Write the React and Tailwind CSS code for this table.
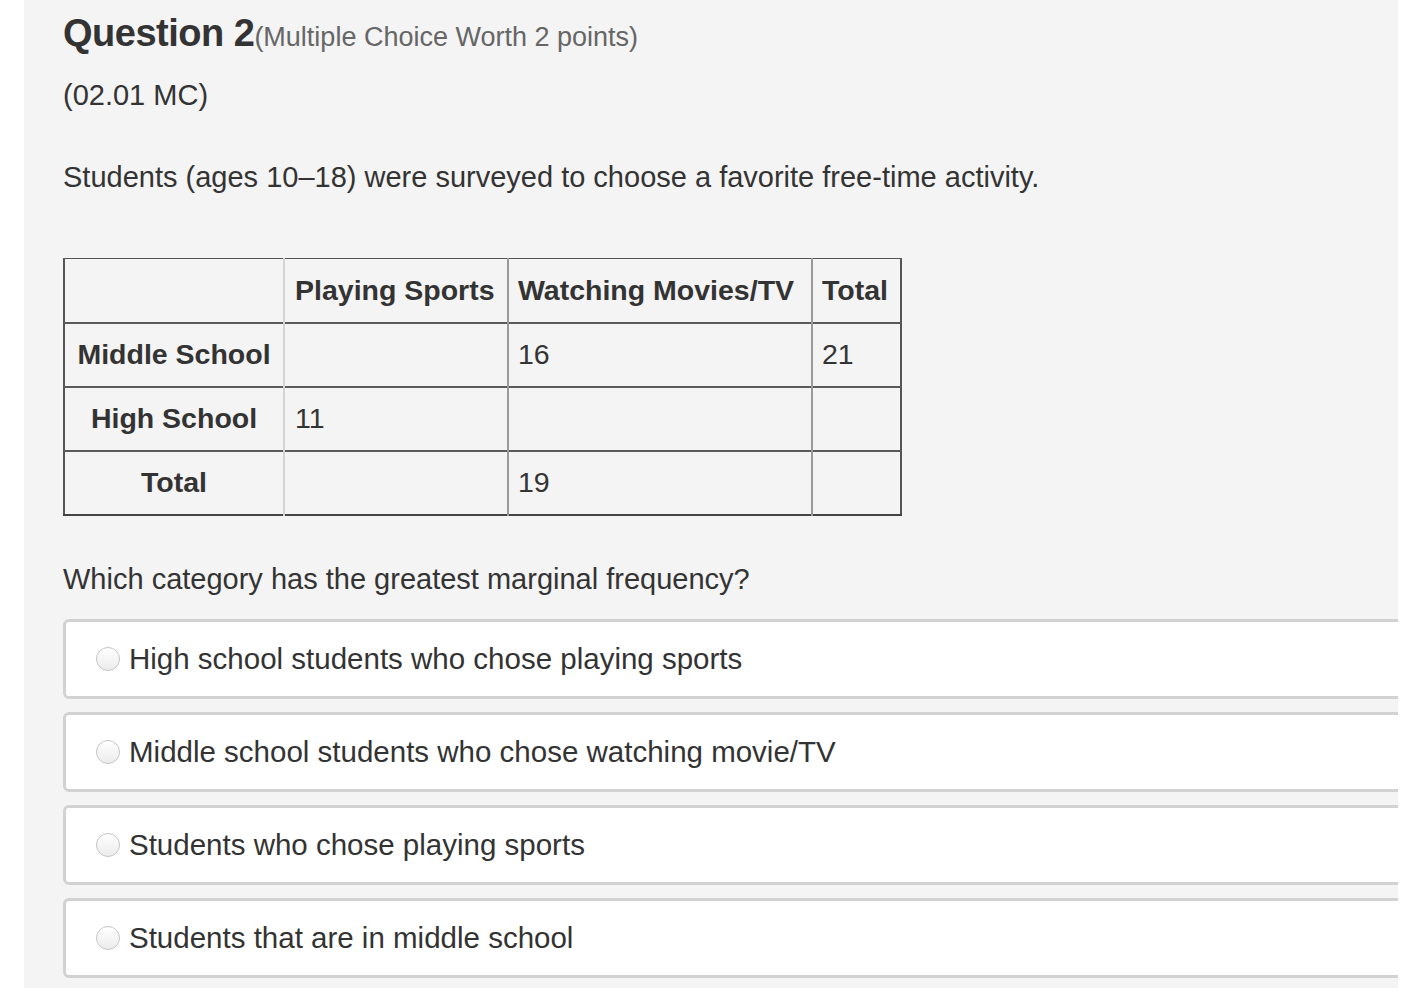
import React from "react";

const font = { fontFamily: '"Liberation Sans", Arial, sans-serif' };

const rows = [
  { label: "Middle School", cells: ["", "16", "21"] },
  { label: "High School", cells: ["11", "", ""] },
  { label: "Total", cells: ["", "19", ""] },
];

const options = [
  "High school students who chose playing sports",
  "Middle school students who chose watching movie/TV",
  "Students who chose playing sports",
  "Students that are in middle school",
];

const Option = ({ text }) => (
  <div className="flex items-center w-[1400px] h-[80px] bg-white border-[3px] border-[#d2d2d2] rounded-[6px] pl-[30px]">
    <span className="w-6 h-6 rounded-full border border-[#c4c4c4] bg-gradient-to-b from-white to-[#ececec] shrink-0"></span>
    <span className="ml-[9px] text-[29.5px] leading-[32px] text-[#333]">{text}</span>
  </div>
);

const App = () => {
  return (
    <div className="w-[1410px] h-[988px] bg-white overflow-hidden" style={font}>
      <div className="ml-[24px] w-[1374px] h-[988px] bg-[#f4f4f4] overflow-hidden pl-[39px] pt-[12px]">
        {/* ------ Header ------ */}
        <div className="leading-[42px] text-[#333]">
          <span className="text-[38px] font-bold tracking-[-0.5px]">Question 2</span>
          <span className="text-[27px] text-[#666]">(Multiple Choice Worth 2 points)</span>
        </div>
        <p className="mt-[17px] text-[29px] leading-[32px] text-[#333]">(02.01 MC)</p>
        <p className="mt-[50px] text-[29px] leading-[32px] text-[#333]">
          Students (ages 10–18) were surveyed to choose a favorite free-time activity.
        </p>

        {/* ------ Table ------ */}
        <table className="mt-[65px] border-collapse text-[28.5px] text-[#333] border-l-2 border-r-2 border-t border-[#555]">
          <tbody>
            <tr className="h-[64px] border-b-2 border-[#5a5a5a]">
              <td className="w-[220px] border-r-2 border-[#d4d4d4]"></td>
              <td className="w-[224px] px-[10px] font-bold border-r-2 border-[#999]">Playing Sports</td>
              <td className="w-[304px] px-[9px] font-bold border-r-2 border-[#999]">Watching Movies/TV</td>
              <td className="w-[89px] px-[9px] font-bold">Total</td>
            </tr>
            {rows.map((r, i) => (
              <tr key={i} className={"h-[64px] " + (i < 2 ? "border-b-2 border-[#5a5a5a]" : "border-b-2 border-[#444]")}>
                <td className="text-center font-bold border-r-2 border-[#d4d4d4]">{r.label}</td>
                <td className="px-[10px] border-r-2 border-[#999]">{r.cells[0]}</td>
                <td className="px-[9px] border-r-2 border-[#999]">{r.cells[1]}</td>
                <td className="px-[9px]">{r.cells[2]}</td>
              </tr>
            ))}
          </tbody>
        </table>

        <p className="mt-[47px] text-[29px] leading-[32px] text-[#333]">Which category has the greatest marginal frequency?</p>

        {/* ------ Options ------ */}
        <div className="mt-[24px] flex flex-col gap-[13px]">
          {options.map((o) => (
            <Option key={o} text={o} />
          ))}
        </div>
      </div>
    </div>
  );
};

export default App;
